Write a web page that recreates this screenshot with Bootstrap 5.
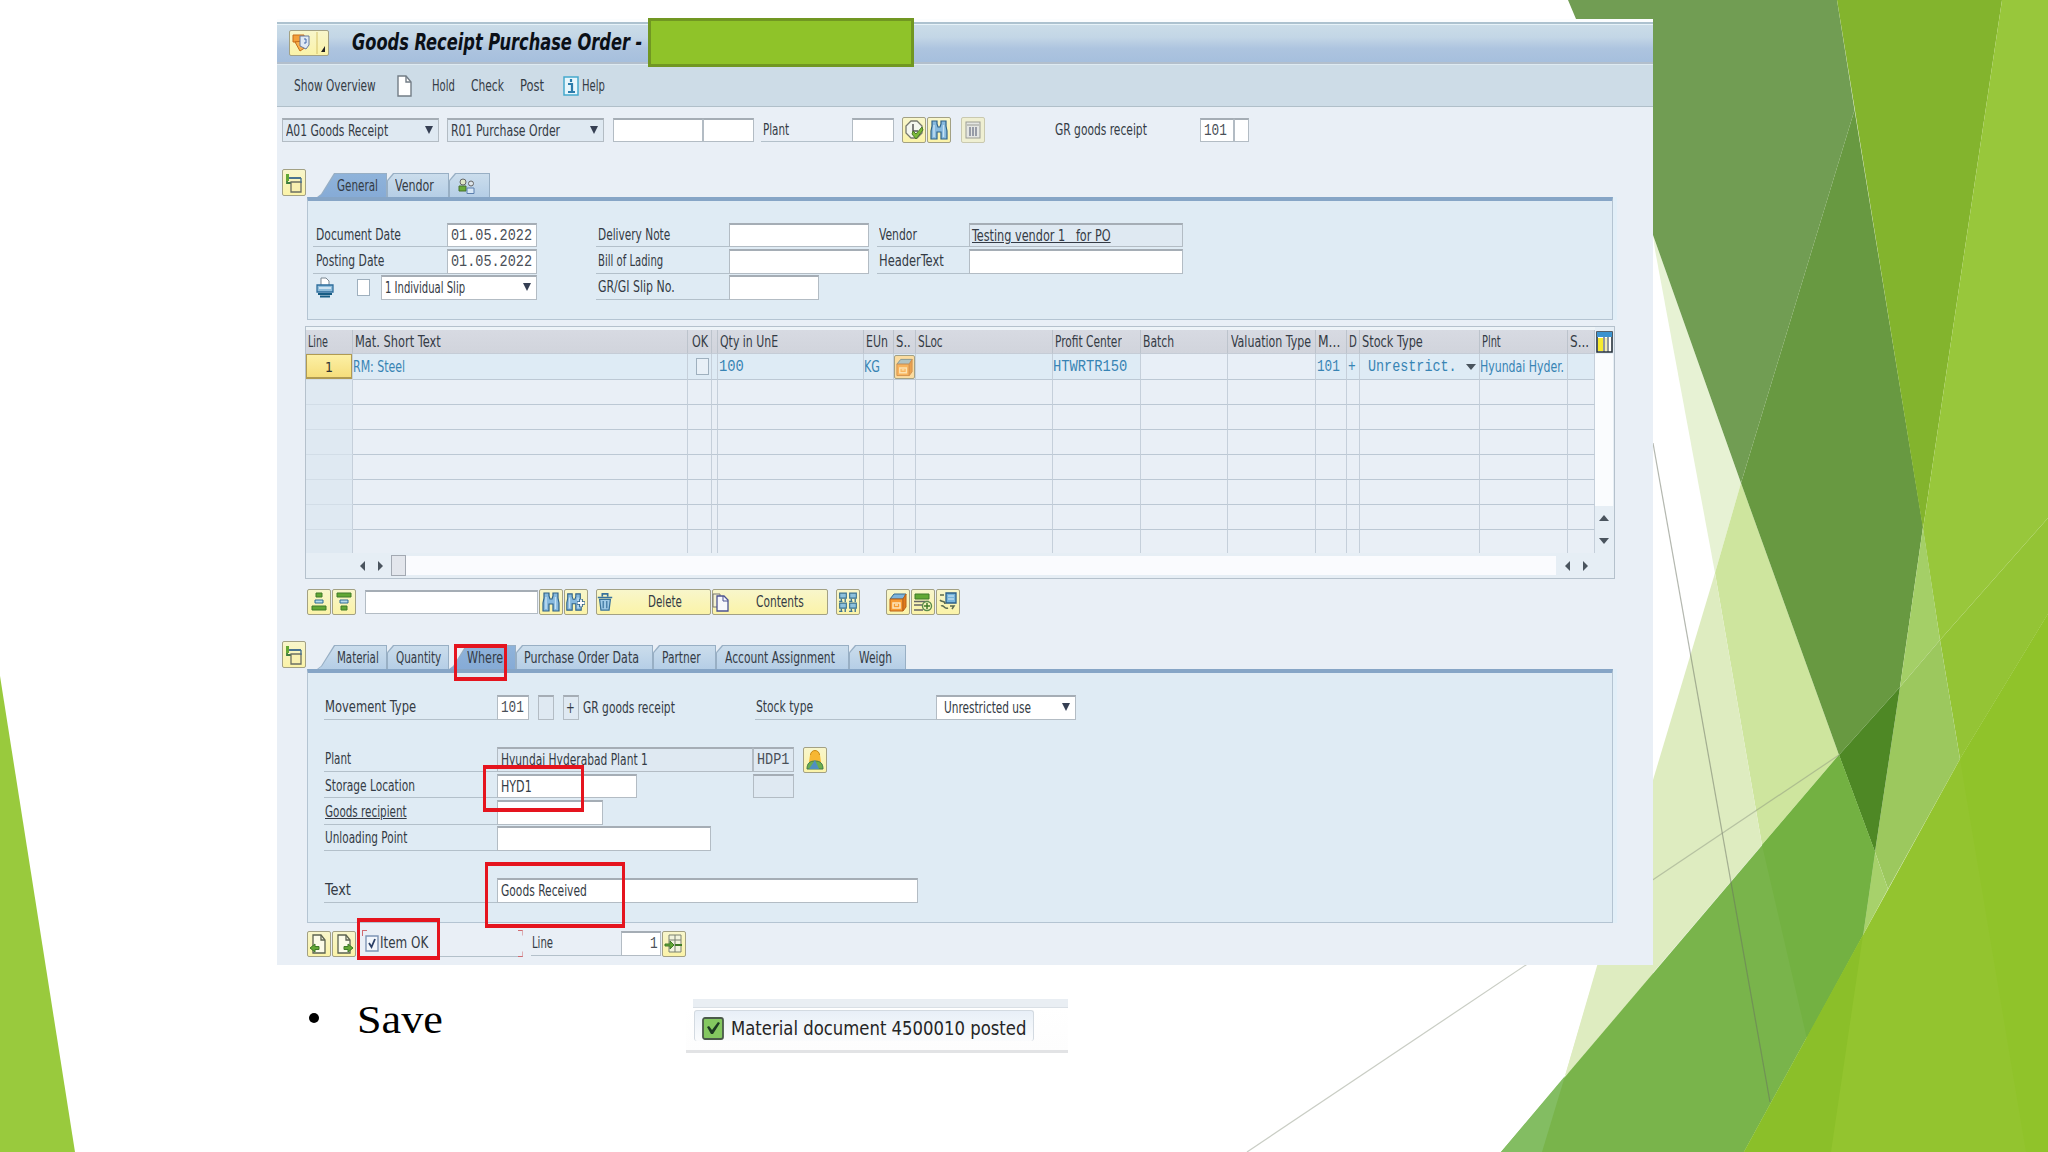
<!DOCTYPE html>
<html lang="en">
<head>
<meta charset="utf-8">
<title>Goods Receipt Purchase Order</title>
<link href="https://cdn.jsdelivr.net/npm/bootstrap@5.3.0/dist/css/bootstrap.min.css" rel="stylesheet">
<style>
body{width:2048px;height:1152px;overflow:hidden;background:#fff;color:#343b45;font-family:"DejaVu Sans Condensed","DejaVu Sans",sans-serif;font-size:15.5px;line-height:1}
.slide{width:2048px;height:1152px;overflow:hidden}
.backdrop{left:0;top:0;width:2048px;height:1152px}
.sap{margin:19px 0 0 277px;width:1376px;height:946px;background:#e9eff6;border-top:3px solid #fbfdfe}
.t{display:inline-block;white-space:pre;transform-origin:0 50%;width:0;padding-top:2px}
.mono{font-family:"Liberation Mono",monospace;font-size:16px;color:#4a5058}
.mono .t{padding-top:0}
.titlebar{height:42px;background:linear-gradient(#cbdde8 0,#c3d6e6 35%,#adc4df 65%,#a6bfdd 100%);border-top:2px solid #adc2cf;border-bottom:2px solid #b3bfcc;box-shadow:inset 0 1px #e6f2f8;padding-left:12px}
.title{font-size:23.5px;font-weight:bold;font-style:italic;color:#0b1017;margin:-2px 0 0 23px}
.toolbar{height:43px;background:#cddce7;border-bottom:1px solid #b0bfc9;border-top:1px solid #deeaf2}
.g{display:grid;align-items:center}
.g-tools{grid-template-columns:16.6px 103.4px 34.6px 39.4px 49px 43px 19px 40px;height:41px}
.g-sel{grid-template-columns:157px 8px 157px 9px 90px 51px 7px 91px 42px 8px 24px 1px 24px 10px 24px 70px 145px 34px 15px;margin:10px 0 0 5px;height:26px}
.fld{height:24.5px;background:#fff;border:1px solid #b3bcc4;border-top:2px solid #a5adb5;padding-left:3px;display:flex;align-items:center}
.ro{background:#dfe9f2}
.drop{justify-content:space-between;padding-right:5px}
.drop::after{content:"";border:4.5px solid transparent;border-top:8px solid #353f53;border-bottom:0;margin-top:-2px}
.lbl{height:24.5px;border-bottom:1px solid #b3c0ca;display:flex;align-items:center;padding-left:2px}
.ib{width:24px;height:26px;background:linear-gradient(#f8f6cb,#fbf3a8);border:1.5px solid #a3a184;border-radius:2px;padding:1px;display:flex;align-items:center;justify-content:center}
.ib svg{width:20px;height:22px;display:block}
.ib.dim{background:#efefd2;border-color:#c9c9b0}
.tabs{height:28px;padding-left:5px}
.tabs .ib{height:27px;align-self:flex-start;margin-right:11px}
.stab{height:24px;margin-top:4px;padding-top:2px;background:#98afc4;clip-path:polygon(0 100%,0 30%,6px 0,100% 0,100% 100%);position:relative;display:flex;align-items:center;flex:none}
.stab::before{content:"";position:absolute;inset:1px 1px 0 1px;background:linear-gradient(#cbddec,#b5cee6);clip-path:polygon(0 100%,0 30%,6px 0,100% 0,100% 100%)}
.stab>*{position:relative}
.stab.slant,.stab.slant::before{clip-path:polygon(0 100%,4px 88%,17px 0,100% 0,100% 100%)}
.stab.on::before{background:linear-gradient(#8fb3da,#86abd6)}
.pane{margin-left:30px;width:1306px;background:#dfebf4;border:1px solid #b4c4d2;border-top:4px solid #86a5c6;box-shadow:4px 0 #e2eff8}
.p1{height:123px;padding:21px 0 0 8px}
.p1 .g{height:26.2px}
.g-d{grid-template-columns:131px 90px 59px 133px 140px 8px 92px 214px}
.g-s{grid-template-columns:41px 24px 156px 59px 133px 90px}
.cb{width:13px;height:17px;border:1.5px solid #9fb0be;background:#fff}
.grid-box{margin:6px 0 0 28px;width:1310px;height:253px;border:1px solid #b5c1cc;background:#e6eef5}
.lines{table-layout:fixed;border-collapse:separate;border-spacing:0;width:1289px;border-top:3px solid #eef4f8}
.lines td,.lines th{font-weight:normal;padding:0 0 0 2px;border-right:1px solid #c5cfda;border-bottom:1px solid #bcc8d4;height:25px;overflow:hidden;vertical-align:middle}
.lines th{height:24px;background:linear-gradient(#d7dae2,#d1d4dc);border-right-color:#bcc3cc;border-bottom-color:#c5ccd6;padding-left:2px}
.lines td:first-child{background:#dfe9f2;border-bottom-color:#d2dde7}
.lines td{background:#e9eff6}
.lines .first td{height:26px;color:#3884b4;background:#deebf5}
.lines .last td{height:23px;border-bottom:0}
.lines .first td:first-child{padding:0}
.first .lite{background:#e8eff7 !important}
.rowno{height:25px;background:linear-gradient(#fcf0a6,#f6de7c);border:1px solid #b09a52;border-bottom-width:2px;color:#333;font-size:14px;padding-top:2px}
.tri-u,.tri-d,.tri-l,.tri-r{border:5px solid transparent;width:0;height:0}
.tri-u{border-bottom:6px solid #4a545e;border-top:0}
.tri-d{border-top:6px solid #4a545e;border-bottom:0}
.tri-l{border-right:5px solid #4a545e;border-left:0}
.tri-r{border-left:5px solid #4a545e;border-right:0}
.vs{width:18px}
.vs-track{height:152px;background:#fafcfe;width:18px}
.hs{height:19px;margin:3px 0 0 48px}
.hs-track{width:1165px;height:19px;background:#fafbfe}
.thumb{width:15px;height:21px;background:#e3e6ec;border:1.5px solid #a3a9b2}
.g-act{grid-template-columns:24px 1px 24px 9px 173px 1px 24px 1px 24px 8px 115px 1px 116px 8px 24px 26px 24px 1px 24px 1px 24px;margin:10px 0 0 29.5px;height:26px}
.wide{width:100%;justify-content:flex-start}
.p2{height:254px;padding:21.5px 0 0 15.5px}
.p2 .g{height:26.3px}
.g-m{grid-template-columns:173.5px 32px 9px 16px 9px 16px 175px 5px 177px 140px;margin-bottom:25.8px}
.g-p{grid-template-columns:173.5px 256px 41px 9px 25px}
.g-l{grid-template-columns:173.5px 140px 116px 41px}
.g-r{grid-template-columns:173.5px 106px}
.g-u{grid-template-columns:173.5px 214px;margin-bottom:25.7px}
.g-t{grid-template-columns:173.5px 421px}
.p2 .lbl{padding-left:1px}
.g-f{grid-template-columns:24px 1px 24px 8px 159px 8px 90px 40px 1px 24px;margin:7px 0 0 29.5px;height:26px}
.focusbox{height:27px;border-bottom:1px solid #b3c0ca;position:relative;padding-left:1px}
.focusbox::before{content:"";position:absolute;left:-2px;top:0;width:5px;height:6px;border:solid #d06a70;border-width:1.5px 0 0 1.5px}
.focusbox::after{content:"";position:absolute;right:0;top:0;width:5px;height:27px;border-right:1.5px solid #d06a70;border-top:1.5px solid #d06a70;border-bottom:1.5px solid #d06a70;clip-path:polygon(0 0,100% 0,100% 20%,0 20%,0 80%,100% 80%,100% 100%,0 100%)}
.mask{left:648px;top:18px;width:266px;height:49px;background:#8fc329;border:3px solid #719722}
.hl{border:4px solid #e5141e;border-left-width:3px;border-right-width:3px}
.h1r{left:454px;top:644px;width:53px;height:37px}
.h2r{left:483px;top:765px;width:101px;height:47px}
.h3r{left:485px;top:862px;width:140px;height:66px}
.h4r{left:357px;top:918px;width:83px;height:42px}
.foot{height:187px}
.bul{width:10px;height:10px;border-radius:50%;background:#000;margin:48px 0 0 309px}
.save{font-family:"Liberation Serif",serif;font-size:39px;color:#000;margin:33px 0 0 38px;width:329px}
.toast-strip{width:382px;height:54px;margin-top:34px;background:linear-gradient(#fff,#fff 9px,#fdfdfd);border-bottom:3px solid #e2e3e5}
.ts-top{height:9px;margin-left:7px;background:#e9eef3;border-bottom:1px solid #d9dfe5}
.ts-box{height:31px;width:340px;margin:2px 0 0 8px;border:1px solid #d3dae1;border-bottom:0;border-radius:3px;background:linear-gradient(#e8eff7,#fbfcfd);padding:4px 0 0 7px}
.ts-txt{font-size:19.5px;color:#262626}
</style>
<script src="https://cdn.jsdelivr.net/npm/bootstrap@5.3.0/dist/js/bootstrap.bundle.min.js"></script>
</head>
<body>
<svg width="0" height="0" class="position-absolute">
<defs>
<symbol id="bino" viewBox="0 0 20 22"><path d="M3 2h5v3l1 3h2l1-3V2h5v5l1 5v8h-6v-7H8v7H2v-8l1-5z" fill="#86b9de" stroke="#2f6288" stroke-width="1.2"/><path d="M5 6v12M14.500 6v12" stroke="#c6e2f4" stroke-width="1.4"/></symbol>
<symbol id="exec" viewBox="0 0 20 22"><path d="M7 2h6l5 5v7l-5 5H7l-5-5V7z" fill="#f4f6ee" stroke="#76786e" stroke-width="1.3"/><path d="M9 5v7h5" fill="none" stroke="#555" stroke-width="1.5"/><path d="M8 15l4 5 7-9-1-3-6 7-3-3z" fill="#7bb83a" stroke="#4c7a26"/></symbol>
<symbol id="trash" viewBox="0 0 20 22"><path d="M2 6h16M7 5V2h6v3" fill="none" stroke="#37719c" stroke-width="1.8"/><path d="M4 8h12l-1.5 12h-9z" fill="#9fcbe8" stroke="#37719c" stroke-width="1.4"/><path d="M8 10v8M12 10v8" stroke="#37719c" stroke-width="1.3"/></symbol>
<symbol id="tree" viewBox="0 0 20 22"><path d="M3 2v9h5" fill="none" stroke="#3f7d3f" stroke-width="1.8"/><path d="M2 2h3v7H2z" fill="#62a834"/><path d="M5 6h12" stroke="#4a7390" stroke-width="2"/><path d="M7 10h10v10H7z" fill="#f8f0b0" stroke="#6b6f63" stroke-width="1.3"/><path d="M17 6v5" stroke="#4a7390" stroke-width="1.4"/></symbol>
<symbol id="box" viewBox="0 0 20 22"><path d="M2 8l4-5h12l-3 5z" fill="#7fb4dc" stroke="#34688f"/><path d="M2 8h13v12H2z" fill="#f79a33" stroke="#b9631a"/><path d="M15 8l3-5v13l-3 4z" fill="#e07b1b" stroke="#b9631a"/><path d="M5 17v-5h7v5zM7 14h3" stroke="#fde6bd" stroke-width="1.5" fill="none"/></symbol>
<symbol id="pg" viewBox="0 0 20 22"><path d="M4 2h8l4 5v13H4z" fill="#fbfbe8" stroke="#5c6350" stroke-width="1.3"/><path d="M12 2v5h4" fill="none" stroke="#5c6350" stroke-width="1.3"/></symbol>
<symbol id="grp" viewBox="0 0 9 9"><path d="M1.500 1h6v4.500h-6z" fill="#8cc0dc" stroke="#3b7290"/><path d="M3 6v3M6.500 6v3M1 8.500h3" stroke="#3b7290" stroke-width="1.2"/></symbol>
</defs>
</svg>
<main class="slide position-relative">
<svg class="backdrop position-absolute" viewBox="0 0 2048 1152">
<path d="M0 676L75 1152H0z" fill="#99ca3d"/>
<path d="M1653 235L1741 483 1715 573 1655 250z" fill="#e7f2d4"/>
<path d="M1741 483L1839 755 1762 845 1715 573z" fill="#cee59e"/>
<path d="M1715 573L1762 845 1565 1076 1653 780z" fill="#deecc0"/>
<path d="M1653 780L1597 966 1565 1076 1653 1000z" fill="#deecc0"/>
<path d="M1568 0H1837L1854.500 110 1741 483 1653 235V19H1576z" fill="#719d53"/>
<path d="M1854.500 110L1923 527 1900 687 1839 755 1741 483z" fill="#689941"/>
<path d="M1837 0H2002L1923 529z" fill="#83b42d"/>
<path d="M2002 0H2048V518L1940 640 1923 529z" fill="#98c73b"/>
<path d="M2048 518V614L1960 759 1940 640z" fill="#94c435"/>
<path d="M1923 527L1940 640 1900 687z" fill="#a4cf67"/>
<path d="M1940 640L1960 759 1888 889 1875 852 1900 687z" fill="#9cc85e"/>
<path d="M1875 852L1888 889 1863 935z" fill="#a7d16b"/>
<path d="M1839 755L1900 687 1875 852z" fill="#4e8825"/>
<path d="M1839 755L1875 852 1863 935 1744 1152H1501z" fill="#79b44b"/>
<path d="M1839 755L1875 852 1863 935 1807 1039 1762 845z" fill="#73b142"/>
<path d="M1501 1152L1565 1076 1542 1152z" fill="#83bd62"/>
<path d="M2048 614V1152H1744L1863 935 1960 759z" fill="#93c42f"/>
<path d="M1863 935L1831 1152H1744z" fill="#8bbf29"/>
<path d="M1960 759L2048 614V1152H2026z" fill="#90c32a"/>
<path d="M1653 443L1770 1102" stroke="#68705f" stroke-opacity=".5" stroke-width="1.2"/>
<path d="M1247 1152L1839 755" stroke="#87907d" stroke-opacity=".45" stroke-width="1.2"/>
</svg>

<section class="sap position-relative float-start">
 <header class="titlebar d-flex align-items-center">
  <div class="ib" style="width:40px"><svg viewBox="0 0 36 22" style="width:36px"><path d="M2 3h11v7H2z" fill="#f4a03a" stroke="#c66d18"/><path d="M4 10l5 9 6-4-4-6z" fill="#f7b04d" stroke="#c66d18"/><path d="M9 4h9v9l-3 4-6-3z" fill="#dfe9f4" stroke="#66789b"/><path d="M13 7h2v4h-2" stroke="#3e64a8" fill="none"/><path d="M26 0v22" stroke="#d5c26a"/><path d="M34 14v6h-4z" fill="#222"/></svg></div>
  <div class="title"><span class="t" data-w="290">Goods Receipt Purchase Order -</span></div>
 </header>
 <nav class="toolbar"><div class="g g-tools"><i></i><span class="t" data-w="82">Show Overview</span>
  <svg width="15" height="22" viewBox="0 0 15 22"><path d="M1 1h8l5 6v14H1z" fill="#fff" stroke="#737d86" stroke-width="1.4"/><path d="M9 1v6h5" fill="none" stroke="#737d86" stroke-width="1.4"/></svg>
  <span class="t" data-w="23">Hold</span><span class="t" data-w="33">Check</span><span class="t" data-w="24">Post</span>
  <svg width="16" height="20" viewBox="0 0 16 20"><path d="M1 1h14v18H1z" fill="#e7f6fc" stroke="#45a9cd" stroke-width="1.5"/><path d="M8 3v3M5 8h4v8M5 16h7" stroke="#2c7cab" stroke-width="2.2" fill="none"/></svg>
  <span class="t" data-w="23">Help</span></div></nav>

 <div class="g g-sel">
  <div class="fld ro drop"><span class="t" data-w="102">A01 Goods Receipt</span></div><i></i>
  <div class="fld ro drop"><span class="t" data-w="109">R01 Purchase Order</span></div><i></i>
  <div class="fld"></div><div class="fld"></div><i></i>
  <div class="lbl"><span class="t" data-w="26">Plant</span></div><div class="fld"></div><i></i>
  <div class="ib"><svg><use href="#exec"/></svg></div><i></i><div class="ib"><svg><use href="#bino"/></svg></div><i></i>
  <div class="ib dim"><svg viewBox="0 0 20 22"><rect x="3" y="3" width="14" height="16" fill="#e4e6e2" stroke="#9b9d94"/><path d="M4 6h12" stroke="#9b9d94"/><path d="M7 8v9M10 8v9M13 8v9" stroke="#8e93a0" stroke-width="1.8"/></svg></div><i></i>
  <span class="t" data-w="92">GR goods receipt</span><div class="fld mono"><span class="t" data-w="23">101</span></div><div class="fld"></div>
 </div>

 <div class="tabs d-flex" style="margin-top:26px"><div class="ib"><svg><use href="#tree"/></svg></div>
  <div class="stab slant on" style="width:70px;padding-left:20px"><span class="t" data-w="41">General</span></div>
  <div class="stab" style="width:62px;padding-left:8px"><span class="t" data-w="39">Vendor</span></div>
  <div class="stab" style="width:41px;padding-left:9px"><svg width="18" height="16" viewBox="0 0 18 16"><circle cx="5" cy="4" r="3" fill="#dde5c4" stroke="#666"/><path d="M1 13V8h7v5z" fill="#69ad38" stroke="#47712c"/><circle cx="13" cy="5.500" r="2.500" fill="#dde5ea" stroke="#666"/><path d="M9 15.500V10h7v5.500z" fill="#d7e7f6" stroke="#5b7fae"/></svg></div>
 </div>
 <div class="pane p1">
  <div class="g g-d"><div class="lbl" style="margin-left:-3px;padding-left:3px"><span class="t" data-w="85">Document Date</span></div><div class="fld mono"><span class="t" data-w="81">01.05.2022</span></div><i></i>
   <div class="lbl"><span class="t" data-w="72">Delivery Note</span></div><div class="fld"></div><i></i><div class="lbl"><span class="t" data-w="38">Vendor</span></div><div class="fld ro text-decoration-underline" style="padding-left:2px"><span class="t" data-w="139">Testing vendor 1   for PO</span></div></div>
  <div class="g g-d"><div class="lbl" style="margin-left:-3px;padding-left:3px"><span class="t" data-w="68">Posting Date</span></div><div class="fld mono"><span class="t" data-w="81">01.05.2022</span></div><i></i>
   <div class="lbl"><span class="t" data-w="65">Bill of Lading</span></div><div class="fld"></div><i></i><div class="lbl"><span class="t" data-w="65">HeaderText</span></div><div class="fld"></div></div>
  <div class="g g-s"><svg width="18" height="21" viewBox="0 0 18 21"><path d="M5 8V1h5l3 3v4" fill="#fff" stroke="#7a8791"/><path d="M1 8h16v7H1z" fill="#8fbddb" stroke="#2f6e9c" stroke-width="1.3"/><path d="M3 11h12" stroke="#e4f1f8" stroke-width="1.5"/><path d="M2 17h14M4 19.500h10" stroke="#175d84" stroke-width="2.200"/></svg><div class="cb"></div>
   <div class="fld drop"><span class="t" data-w="80">1 Individual Slip</span></div><i></i><div class="lbl"><span class="t" data-w="77">GR/GI Slip No.</span></div><div class="fld"></div></div>
 </div>

 <div class="grid-box">
  <div class="d-flex">
  <table class="lines"><colgroup id="cols"></colgroup>
   <thead><tr><th><span class="t" data-w="20">Line</span></th><th><span class="t" data-w="86">Mat. Short Text</span></th><th style="padding-left:4px"><span class="t" data-w="16">OK</span></th><th></th><th><span class="t" data-w="58">Qty in UnE</span></th><th><span class="t" data-w="22">EUn</span></th><th><span class="t" data-w="15">S..</span></th><th><span class="t" data-w="25">SLoc</span></th><th><span class="t" data-w="67">Profit Center</span></th><th><span class="t" data-w="31">Batch</span></th><th style="padding-left:3px"><span class="t" data-w="80">Valuation Type</span></th><th><span class="t" data-w="22">M...</span></th><th style="padding-left:2px"><span class="t" data-w="8">D</span></th><th><span class="t" data-w="61">Stock Type</span></th><th><span class="t" data-w="19">Plnt</span></th><th><span class="t" data-w="19">S...</span></th></tr></thead>
   <tbody id="rows"><tr class="first"><td><div class="rowno d-flex align-items-center justify-content-center"><span>1</span></div></td><td style="padding-left:0"><span class="t" data-w="52">RM: Steel</span></td><td style="padding-left:8px"><div class="cb" style="background:#e8f0f7"></div></td><td></td><td class="mono" style="padding-left:1px"><span class="t" data-w="25">100</span></td><td style="padding-left:0"><span class="t" data-w="16">KG</span></td><td class="p-0"><div class="ib" style="width:21px;height:24px;background:#fbdca0;padding:0"><svg style="opacity:.6"><use href="#box"/></svg></div></td><td></td><td class="mono" style="padding-left:0"><span class="t" data-w="74">HTWRTR150</span></td><td class="lite"></td><td class="lite"></td><td class="mono" style="padding-left:1px"><span class="t" data-w="23">101</span></td><td class="mono" style="padding-left:1px"><span class="t" data-w="8">+</span></td><td class="mono"><div class="d-flex align-items-center justify-content-between" style="padding:0 3px 0 6px"><span class="t" data-w="89">Unrestrict.</span><i class="tri-d"></i></div></td><td style="padding-left:0"><span class="t" data-w="84">Hyundai Hyder.</span></td><td></td></tr></tbody>
  </table>
  <div class="vs d-flex flex-column align-items-center"><svg width="17" height="22" viewBox="0 0 17 22" style="margin:4px 0 1px"><path d="M1 1h15v20H1z" fill="#fff" stroke="#28333d" stroke-width="1.6"/><path d="M1 1h15v5H1z" fill="#3c93cf"/><path d="M2 7h5v13H2z" fill="#f7ea2d"/><path d="M8 6v15M12 6v15" stroke="#28333d"/><path d="M9 7h2v13H9z" fill="#f2ebb4"/></svg><div class="vs-track"></div><i class="tri-u" style="margin-top:9px"></i><i class="tri-d" style="margin-top:17px"></i></div>
  </div>
  <div class="hs d-flex align-items-center"><i class="tri-l" style="margin-left:6px"></i><i class="tri-r" style="margin:0 8px 0 13px"></i><div class="hs-track d-flex align-items-center"><div class="thumb"></div></div><i class="tri-l" style="margin-left:9px"></i><i class="tri-r" style="margin-left:13px"></i></div>
 </div>

 <div class="g g-act">
  <div class="ib"><svg viewBox="0 0 20 22"><path d="M7 2h6v4H7zM3 15h14v4H3z" fill="#62a834" stroke="#3f7a28"/><path d="M6 9h8v3H6z" fill="#b8dcec" stroke="#2d6a92"/></svg></div><i></i>
  <div class="ib"><svg viewBox="0 0 20 22"><path d="M3 2h14v4H3zM7 15h6v4H7z" fill="#62a834" stroke="#3f7a28"/><path d="M6 9h8v3H6z" fill="#b8dcec" stroke="#2d6a92"/></svg></div><i></i>
  <div class="fld"></div><i></i><div class="ib"><svg><use href="#bino"/></svg></div><i></i>
  <div class="ib"><svg viewBox="0 0 20 22"><use href="#bino" x="-1" width="18" height="22"/><path d="M15 8v8M11 12h8" stroke="#2f6288" stroke-width="3.600"/><path d="M15 8.500v7M11.500 12h7" stroke="#fff" stroke-width="1.8"/></svg></div><i></i>
  <div class="ib wide"><svg style="width:18px;margin-left:-2px"><use href="#trash"/></svg><span class="t" data-w="34" style="margin-left:34px">Delete</span></div><i></i>
  <div class="ib wide"><svg style="width:18px;margin-left:-2px" viewBox="0 0 18 22"><path d="M1 3h7v13H1z" fill="#f5f2cf" stroke="#777"/><path d="M5 5h7l4 4v11H5z" fill="#f8f8fc" stroke="#4c5390" stroke-width="1.3"/><path d="M11 5v5h5" fill="none" stroke="#4c5390"/></svg><span class="t" data-w="48" style="margin-left:26px">Contents</span></div><i></i>
  <div class="ib"><svg viewBox="0 0 20 22"><use href="#grp" x="0" y="1" width="10" height="10"/><use href="#grp" x="10" y="1" width="10" height="10"/><use href="#grp" x="0" y="11" width="10" height="10"/><use href="#grp" x="10" y="11" width="10" height="10"/></svg></div><i></i>
  <div class="ib"><svg><use href="#box"/></svg></div><i></i>
  <div class="ib"><svg viewBox="0 0 20 22"><path d="M2 3h14v5H2z" fill="#62a834" stroke="#3f7a28"/><path d="M1 14h9M1 19h9M1 10.500h15" stroke="#666" stroke-width="1.500"/><circle cx="14" cy="15" r="4.500" fill="#f4f2bd" stroke="#5c8c4c" stroke-width="1.4"/><path d="M14 12v6M11 15h6" stroke="#3f7a28" stroke-width="1.5"/></svg></div><i></i>
  <div class="ib"><svg viewBox="0 0 20 22"><path d="M8 2h10v10H8z" fill="#76b4dc" stroke="#2d5f88" stroke-width="1.3"/><path d="M10 5h6M10 8h6" stroke="#d9ecf6"/><path d="M2 4h4M2 9c2 3 5 0 5 4M3 15c3-2 3 4 7 2M12 15h4l-2 3" fill="none" stroke="#5a6a50" stroke-width="1.5"/></svg></div>
 </div>

 <div class="tabs d-flex" style="margin-top:26px"><div class="ib"><svg><use href="#tree"/></svg></div>
  <div class="stab slant" style="width:70px;padding-left:20px"><span class="t" data-w="42">Material</span></div>
  <div class="stab" style="width:62px;padding-left:9px"><span class="t" data-w="45">Quantity</span></div>
  <div class="stab slant on" style="width:67px;padding-left:18px"><span class="t" data-w="36">Where</span></div>
  <div class="stab" style="width:137px;padding-left:8px"><span class="t" data-w="115">Purchase Order Data</span></div>
  <div class="stab" style="width:63px;padding-left:9px"><span class="t" data-w="39">Partner</span></div>
  <div class="stab" style="width:133px;padding-left:9px"><span class="t" data-w="110">Account Assignment</span></div>
  <div class="stab" style="width:57px;padding-left:10px"><span class="t" data-w="33">Weigh</span></div>
 </div>
 <div class="pane p2">
  <div class="g g-m"><div class="lbl"><span class="t" data-w="91">Movement Type</span></div><div class="fld mono"><span class="t" data-w="23">101</span></div><i></i><div class="fld ro"></div><i></i><div class="fld ro" style="padding-left:2px"><span class="t" data-w="9">+</span></div><span class="t" data-w="92" style="margin-left:4px">GR goods receipt</span><i></i><div class="lbl" style="margin-left:-4px"><span class="t" data-w="57">Stock type</span></div><div class="fld drop" style="padding-left:7px"><span class="t" data-w="87">Unrestricted use</span></div></div>
  <div class="g g-p"><div class="lbl"><span class="t" data-w="26">Plant</span></div><div class="fld ro"><span class="t" data-w="147">Hyundai Hyderabad Plant 1</span></div><div class="fld ro mono"><span class="t" data-w="32">HDP1</span></div><i></i><div class="ib"><svg viewBox="0 0 20 22"><circle cx="10" cy="6" r="4.500" fill="#f7b733" stroke="#c98916"/><path d="M5 6l-1 7h12L15 6" fill="#f7b733"/><path d="M2 20c0-6 3-8 8-8s8 2 8 8z" fill="#6cae4c" stroke="#3f7a4c"/><path d="M4 20l6-9 4 9z" fill="#4f8fc0"/></svg></div></div>
  <div class="g g-l"><div class="lbl"><span class="t" data-w="90">Storage Location</span></div><div class="fld"><span class="t" data-w="31">HYD1</span></div><i></i><div class="fld ro"></div></div>
  <div class="g g-r"><div class="lbl text-decoration-underline"><span class="t" data-w="82">Goods recipient</span></div><div class="fld"></div></div>
  <div class="g g-u"><div class="lbl"><span class="t" data-w="82">Unloading Point</span></div><div class="fld"></div></div>
  <div class="g g-t"><div class="lbl"><span class="t" data-w="26">Text</span></div><div class="fld"><span class="t" data-w="86">Goods Received</span></div></div>
 </div>
 <div class="g g-f">
  <div class="ib"><svg viewBox="0 0 20 22"><use href="#pg"/><path d="M1 15l5-4v2.500h4v3H6V19z" fill="#62a834" stroke="#3f7a28"/></svg></div><i></i>
  <div class="ib"><svg viewBox="0 0 20 22"><use href="#pg"/><path d="M19 15l-5-4v2.500h-4v3h4V19z" fill="#62a834" stroke="#3f7a28"/></svg></div><i></i>
  <div class="focusbox d-flex align-items-center"><svg width="14" height="17" viewBox="0 0 14 17"><path d="M1 1h12v15H1z" fill="#f3f7fc" stroke="#7e95b5" stroke-width="1.4"/><path d="M4 8l2.500 4L10 4" fill="none" stroke="#2b3f66" stroke-width="1.8"/></svg><span class="t" data-w="48" style="margin-left:1px">Item OK</span></div><i></i>
  <div class="lbl" style="padding-left:1px"><span class="t" data-w="21">Line</span></div><div class="fld mono" style="padding-left:28px"><span class="t" data-w="8">1</span></div><i></i>
  <div class="ib"><svg viewBox="0 0 20 22"><path d="M5 2h12v17H5zM5 7h12M11 2v17" fill="#f2f4dd" stroke="#7a8170"/><path d="M1 11h5V8l4 4-4 4v-3H1z" fill="#62a834" stroke="#3f7a28"/><path d="M11 12h7" stroke="#3f7a28" stroke-width="2"/></svg></div>
 </div>
</section>

<footer class="foot d-flex align-items-start float-start">
 <div class="bul"></div>
 <div class="save"><span class="t" data-w="86">Save</span></div>
 <div class="toast-strip"><div class="ts-top"></div><div class="ts-box d-flex align-items-center">
  <svg width="22" height="23" viewBox="0 0 22 23"><rect x="1" y="1" width="20" height="21" rx="2" fill="#84c860" stroke="#4a5a4a" stroke-width="1.8"/><path d="M5 10l2-1 3 4 6-8 2 1-7 11h-2z" fill="#1d3a22"/></svg>
  <span class="t ts-txt" data-w="295" style="margin-left:7px">Material document 4500010 posted</span></div></div>
</footer>

<div class="mask position-absolute"></div>
<div class="hl h1r position-absolute"></div><div class="hl h2r position-absolute"></div><div class="hl h3r position-absolute"></div><div class="hl h4r position-absolute"></div>
</main>
<script>
// column widths of the item table
document.getElementById('cols').innerHTML=[47,335,24,6,146,30,22,137,88,87,88,31,13,120,88,27].map(w=>`<col style="width:${w}px">`).join('');
// empty item lines under the first one
const body=document.getElementById('rows');
for(let i=0;i<7;i++)body.insertAdjacentHTML('beforeend',`<tr class="${i==6?'last':''}">${'<td></td>'.repeat(16)}</tr>`);
// narrow each caption to its width in the condensed UI face
document.querySelectorAll('.t[data-w]').forEach(e=>{
  e.style.width='max-content';
  const w=e.offsetWidth;
  e.style.transform=`scaleX(${e.dataset.w/w})`;
  e.style.width=w+'px';
  e.style.marginRight=(e.dataset.w-w)+'px';
});
</script>
</body>
</html>
